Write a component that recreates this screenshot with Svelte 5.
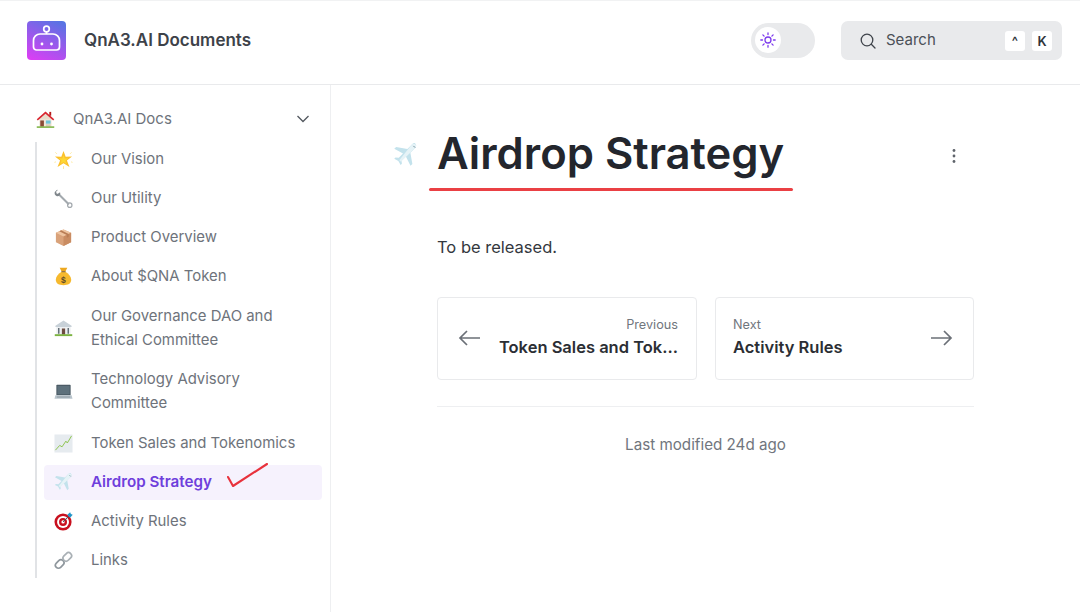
<script>
  const items = [
    { icon: 'star', label: 'Our Vision' },
    { icon: 'wrench', label: 'Our Utility' },
    { icon: 'box', label: 'Product Overview' },
    { icon: 'money', label: 'About $QNA Token' },
    { icon: 'bank', label: 'Our Governance DAO and Ethical Committee', extra: 'top' },
    { icon: 'laptop', label: 'Technology Advisory Committee', extra: 'bottom' },
    { icon: 'chart', label: 'Token Sales and Tokenomics' },
    { icon: 'plane', label: 'Airdrop Strategy', active: true },
    { icon: 'target', label: 'Activity Rules' },
    { icon: 'link', label: 'Links' }
  ];
</script>

{#snippet emoji(name)}
  <svg class="emoji" viewBox="0 0 20 20" aria-hidden="true">
    {#if name === 'house'}
      <rect x="3.500" y="8" width="13" height="9.500" fill="#f3e9dc"/>
      <path d="M10 3.600 16.500 9v1h-13V9z" fill="#e8dccb"/>
      <path d="M.8 9.800 10 1.500l9.200 8.300-1.100 1.200L10 3.900 1.900 11z" fill="#d9252f"/>
      <rect x="14" y="2" width="2" height="4" fill="#b71c1c"/>
      <rect x="4.500" y="11" width="3.800" height="6.500" fill="#8a4b36"/>
      <rect x="10.400" y="11" width="5" height="3.400" fill="#6fc3d8"/>
      <rect x="10.400" y="15" width="5" height="2.500" fill="#d8cbb8"/>
      <rect x=".8" y="17.200" width="18.400" height="1.600" fill="#7cb342"/>
    {:else if name === 'star'}
      <path d="M10 1 12.300 7.200 19 6.800 13.600 11 16.300 18 10 14 3.700 18 6.400 11 1 6.800 7.700 7.200z" fill="#fbc02d"/>
      <path d="M10 5.500 11.300 9l3.700-.2-3 2.400 1.400 3.600L10 12.700l-3.400 2.100L8 11.200 5 8.800l3.700.2z" fill="#fdd835"/>
      <path d="M10 17v3M1.500 2.500l1.500 1.500M18.500 2.500 17 4M.5 13l1.500-.5M19.500 13l-1.500-.5" stroke="#fde68a" stroke-width=".9"/>
    {:else if name === 'wrench'}
      <path d="M5 5.500 15 15.500" stroke="#a3a9ae" stroke-width="2.200" stroke-linecap="round"/>
      <path d="M.8 3.200 3.200.8 4 1l-1.800 2 .5 1.700 1.700.5L6.200 3.400l.4.800c.3 2.500-1.800 4-4 3.200C1 6.700.3 5 .8 3.200z" fill="#7f868b"/>
      <circle cx="16.600" cy="17" r="2.300" fill="none" stroke="#a3a9ae" stroke-width="1.300"/>
    {:else if name === 'box'}
      <path d="M10 1.500 18 5v10l-8 4-8-4V5z" fill="#d9a27a"/>
      <path d="M2 5l8 4 8-4-8-3.500z" fill="#eec4a0"/>
      <path d="M10 9v10l8-4V5z" fill="#c98c62"/>
      <path d="M5.500 3.300l8 4v3l2-1v-3l-8-3.900z" fill="#b97d55"/>
    {:else if name === 'money'}
      <path d="M6 .8h8l-2 4h-4z" fill="#eda81f"/>
      <path d="M7.600 5.200h4.800c3.200 2 5.700 5 5.700 8.300 0 4-3.500 5.700-8.100 5.700s-8.100-1.700-8.100-5.700c0-3.300 2.500-6.300 5.700-8.300z" fill="#f6b92e"/>
      <rect x="7.800" y="4.300" width="4.400" height="1.200" fill="#8d6e3f"/>
      <text x="10" y="16.500" font-size="9" font-weight="700" text-anchor="middle" fill="#5d4a2a" font-family="Liberation Sans, sans-serif">$</text>
    {:else if name === 'bank'}
      <path d="M10 1.500 18.500 7v1.500h-17V7z" fill="#c8d1d8"/>
      <rect x="2.500" y="8.500" width="15" height="8" fill="#eceff1"/>
      <path d="M5 9.500v6M15 9.500v6" stroke="#5f6b74" stroke-width="1.500"/>
      <rect x="8.300" y="10" width="3.400" height="6.500" fill="#6d4c41"/>
      <rect x=".8" y="16" width="18.400" height="2" fill="#7cb342"/>
    {:else if name === 'laptop'}
      <rect x="2.500" y="3" width="15" height="11" rx=".7" fill="#46565f"/>
      <rect x="3.500" y="4" width="13" height="9" fill="#5e717c"/>
      <path d="M1.500 14h17l1 3.500H.5z" fill="#b8c4cc"/>
      <path d="M3 15.200h14M3 16.300h14" stroke="#87959e" stroke-width=".5"/>
    {:else if name === 'chart'}
      <rect x=".5" y=".5" width="19" height="19" fill="#e6ebef"/>
      <path d="M1.500 17 6 12l2.500 1.500 4-6 1.500 2L18.500 2" fill="none" stroke="#8bc34a" stroke-width="1"/>
    {:else if name === 'plane'}
      <path d="M18.300 1.400c.5.600.2 1.700-.8 2.700l-3.600 3.600 1.600 9-1.500 1.500-3.800-7.600-3.400 3.400.3 2.600-1 1-1.800-3.300-3.300-1.800 1-1 2.600.3 3.400-3.400L1 4.600l1.500-1.500 9 1.600 3.600-3.600c1-1 2.200-1.300 2.700-.7z" fill="#c3e2ec"/>
      <path d="M18.300 1.400c.5.600.2 1.700-.8 2.700L6.400 15 5 13.700 15.100 1.100c1-1 2.700-.3 3.200.3z" fill="#e6f3f7"/>
      <path d="M16.300 2.300l1.400 1.400" stroke="#5f7f8c" stroke-width=".7"/>
    {:else if name === 'target'}
      <circle cx="9.500" cy="10.500" r="9" fill="#c8101e"/>
      <circle cx="9.500" cy="10.500" r="6.300" fill="#fff"/>
      <circle cx="9.500" cy="10.500" r="4.200" fill="#c8101e"/>
      <circle cx="9.500" cy="10.500" r="1.700" fill="#fff"/>
      <path d="M9.500 10.500 16 4" stroke="#455a64" stroke-width="1"/>
      <path d="M14 3 17 .3 17.800 2.200 19.700 3 17 6z" fill="#2196c9"/>
    {:else if name === 'link'}
      <rect x="1" y="10.500" width="10" height="6.400" rx="3.200" transform="rotate(-45 6 13.700)" fill="none" stroke="#8f979d" stroke-width="1.800"/>
      <rect x="9" y="3" width="10" height="6.400" rx="3.200" transform="rotate(-45 14 6.200)" fill="none" stroke="#a9b0b5" stroke-width="1.800"/>
    {/if}
  </svg>
{/snippet}

<div class="page">
  <header class="topbar">
    <div class="brand">
      <span class="logo">
        <svg viewBox="0 0 39 39" width="39" height="39" fill="none" stroke="#fff" stroke-width="1.700" aria-hidden="true">
          <circle cx="19.500" cy="8" r="2.800"/>
          <path d="M19.500 11v2"/>
          <path d="M13 13h13a6.500 6.500 0 0 1 6.500 6.500V26a3 3 0 0 1-3 3H9.500a3 3 0 0 1-3-3v-6.500A6.500 6.500 0 0 1 13 13z"/>
          <circle cx="15" cy="23" r="1.400" fill="#fff" stroke="none"/>
          <circle cx="24.500" cy="23" r="1.400" fill="#fff" stroke="none"/>
        </svg>
      </span>
      <span class="brand-name">QnA3.AI Documents</span>
    </div>
    <div class="tools">
      <div class="toggle">
        <span class="knob">
          <svg viewBox="0 0 16 16" width="16" height="16" fill="none" stroke="#7c3aed" stroke-width="1.300" stroke-linecap="round" aria-hidden="true">
            <circle cx="8" cy="8" r="3"/>
            <path d="M8 .8v1.700M8 13.500v1.700M.8 8h1.700M13.500 8h1.700M2.900 2.900l1.200 1.200M11.900 11.900l1.200 1.200M2.900 13.100l1.200-1.200M11.900 4.100l1.200-1.200"/>
          </svg>
        </span>
      </div>
      <div class="search">
        <svg viewBox="0 0 16 16" width="16" height="16" fill="none" stroke="#3f444b" stroke-width="1.300" stroke-linecap="round" aria-hidden="true">
          <circle cx="7" cy="7" r="5.800"/>
          <path d="m11.300 11.300 3.700 3.700"/>
        </svg>
        <span class="search-label">Search</span>
        <span class="kbd">^</span>
        <span class="kbd">K</span>
      </div>
    </div>
  </header>

  <div class="body">
    <aside class="sidebar">
      <div class="root-row">
        {@render emoji('house')}
        <span class="root-label">QnA3.AI Docs</span>
        <svg class="chev" viewBox="0 0 14 8" width="14" height="8" fill="none" stroke="#53585f" stroke-width="1.300" aria-hidden="true"><path d="m1.500 1 5.500 5.500L12.500 1"/></svg>
      </div>
      <ul class="tree">
        {#each items as item}
          <li class="row" class:active={item.active} class:extra-top={item.extra === 'top'} class:extra-bottom={item.extra === 'bottom'}>
            {@render emoji(item.icon)}
            <span>{item.label}</span>
          </li>
        {/each}
      </ul>
    </aside>

    <main class="main">
      <div class="title-row">
        <span class="title-emoji">{@render emoji('plane')}</span>
        <h1>Airdrop Strategy</h1>
        <svg class="more" viewBox="0 0 4 16" width="4" height="16" fill="#5f646b" aria-hidden="true">
          <circle cx="2" cy="2.500" r="1.400"/><circle cx="2" cy="8" r="1.400"/><circle cx="2" cy="13.500" r="1.400"/>
        </svg>
      </div>
      <p class="lead">To be released.</p>
      <div class="pager">
        <div class="card prev">
          <svg viewBox="0 0 22 16" width="22" height="16" fill="none" stroke="#6b7077" stroke-width="1.700" aria-hidden="true"><path d="M22 8H2M9 1 2 8l7 7"/></svg>
          <div class="card-text">
            <small>Previous</small>
            <strong>Token Sales and Tok...</strong>
          </div>
        </div>
        <div class="card next">
          <div class="card-text">
            <small>Next</small>
            <strong>Activity Rules</strong>
          </div>
          <svg viewBox="0 0 22 16" width="22" height="16" fill="none" stroke="#6b7077" stroke-width="1.700" aria-hidden="true"><path d="M0 8h20M13 1l7 7-7 7"/></svg>
        </div>
      </div>
      <div class="modified">Last modified 24d ago</div>
    </main>
  </div>

  <span class="underline"></span>
  <svg class="check" viewBox="0 0 42 26" width="42" height="26" fill="none" stroke="#e8323c" stroke-width="2.100" stroke-linecap="round" stroke-linejoin="round" aria-hidden="true"><path d="M1 14l5 9L40 1"/></svg>
</div>

<style>
  :global(body) {
    margin: 0;
    background: #fff;
  }
  .page {
    position: relative;
    width: 1080px;
    height: 612px;
    overflow: hidden;
    font-family: Inter, "Noto Sans", sans-serif;
    color: #25282e;
    background: #fff;
  }
  .topbar {
    box-sizing: border-box;
    height: 85px;
    display: flex;
    align-items: center;
    justify-content: space-between;
    padding: 0 18px 4px 27px;
    border-top: 1px solid #f1f2f3;
    border-bottom: 1px solid #e9eaec;
  }
  .brand, .tools {
    display: flex;
    align-items: center;
  }
  .brand { gap: 18px; }
  .tools { gap: 26px; }
  .logo {
    display: block;
    width: 39px;
    height: 39px;
    border-radius: 4px;
    background: linear-gradient(205deg, #4f77e2, #e13cf5);
  }
  .logo svg { display: block; }
  .brand-name {
    font-size: 17px;
    font-weight: 600;
    color: #3d4249;
    position: relative;
    top: -1px;
  }
  .toggle {
    box-sizing: border-box;
    width: 64px;
    height: 35px;
    padding: 4px;
    border-radius: 18px;
    background: #e9eaec;
  }
  .knob {
    display: flex;
    align-items: center;
    justify-content: center;
    width: 26px;
    height: 26px;
    border-radius: 50%;
    background: #fff;
  }
  .search {
    box-sizing: border-box;
    width: 221px;
    height: 39px;
    display: flex;
    align-items: center;
    padding: 0 10px 0 19px;
    border-radius: 7px;
    background: #e9eaec;
    color: #4b5057;
    font-size: 15px;
  }
  .search-label {
    margin-left: 10px;
    margin-right: auto;
    position: relative;
    top: -1px;
  }
  .kbd {
    width: 20px;
    height: 20px;
    margin-left: 7px;
    display: flex;
    align-items: center;
    justify-content: center;
    border-radius: 3px;
    background: #fff;
    color: #30343a;
    font-size: 13px;
    font-weight: 600;
  }
  .body {
    display: flex;
    height: 527px;
  }
  .sidebar {
    box-sizing: border-box;
    width: 331px;
    padding: 16.500px 8px 0 35px;
    border-right: 1px solid #eeeff1;
    color: #6e737b;
    font-size: 14.900px;
    line-height: 24px;
  }
  .root-row {
    display: flex;
    align-items: center;
    height: 35px;
    padding-right: 12px;
    margin-bottom: 5px;
  }
  .root-row .emoji { margin-left: 1px; }
  .root-label {
    margin-left: 18px;
    margin-right: auto;
    font-size: 15px;
  }
  .tree {
    list-style: none;
    margin: 0;
    padding: 0 0 0 7px;
    border-left: 2px solid #e1e3e6;
    display: flex;
    flex-direction: column;
    gap: 4px;
  }
  .row {
    display: flex;
    align-items: center;
    gap: 18px;
    padding: 5.500px 8px 5.500px 10px;
    border-radius: 4px;
  }
  .row.extra-top { padding-top: 6.500px; }
  .row.extra-bottom { padding-bottom: 6.500px; }
  .row.active {
    background: #f6f2fd;
    color: #6f3fdc;
    font-size: 15.200px;
    font-weight: 600;
  }
  .emoji {
    flex: none;
    display: block;
    width: 19px;
    height: 19px;
  }
  .main {
    box-sizing: border-box;
    width: 537px;
    margin-left: 106px;
    padding-top: 35px;
  }
  .title-row {
    position: relative;
    display: flex;
    align-items: center;
    height: 68px;
  }
  .title-emoji {
    position: absolute;
    left: -44px;
    top: 23px;
  }
  .title-emoji :global(.emoji) {
    width: 25px;
    height: 25px;
  }
  h1 {
    margin: 0;
    font-size: 43.600px;
    font-weight: 600;
    line-height: 66px;
    color: #23262d;
  }
  .more {
    position: absolute;
    left: 515px;
    top: 28px;
  }
  .lead {
    margin: 0;
    padding-top: 46px;
    font-size: 16.500px;
    line-height: 26px;
    color: #34383e;
  }
  .pager {
    display: grid;
    grid-template-columns: 260px 259px;
    gap: 18px;
    margin-top: 37px;
    padding-bottom: 26px;
    border-bottom: 1px solid #eeeff1;
  }
  .card {
    box-sizing: border-box;
    height: 83px;
    display: flex;
    align-items: center;
    justify-content: space-between;
    padding: 0 20px 2px;
    border: 1px solid #e9eaec;
    border-radius: 4px;
  }
  .card-text {
    display: flex;
    flex-direction: column;
    gap: 1px;
  }
  .prev { padding-right: 18px; }
  .prev .card-text { text-align: right; }
  .next { padding-left: 17px; }
  small {
    font-size: 12.700px;
    line-height: 18px;
    color: #71767d;
  }
  strong {
    font-size: 16.500px;
    font-weight: 600;
    line-height: 24px;
    color: #2b2e34;
  }
  .modified {
    margin-top: 26px;
    text-align: center;
    font-size: 15.200px;
    line-height: 24px;
    color: #71767d;
  }
  .underline {
    position: absolute;
    left: 429px;
    top: 188px;
    width: 364px;
    height: 3px;
    border-radius: 2px;
    background: #ea4044;
  }
  .check {
    position: absolute;
    left: 227px;
    top: 463px;
  }
</style>
